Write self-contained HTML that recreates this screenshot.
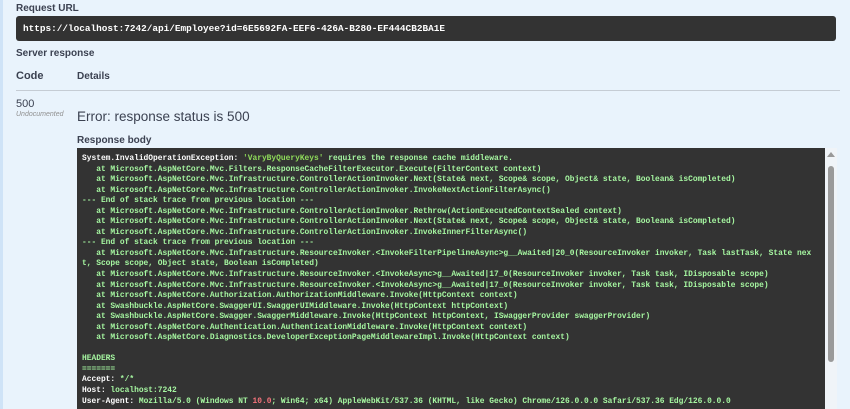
<!DOCTYPE html>
<html><head><style>
body{margin:0;width:850px;height:409px;overflow:hidden;background:#e9f3fc;font-family:"Liberation Sans",sans-serif;color:#3b4151;position:relative}
.lb{position:absolute;left:0;top:0;width:3px;height:409px;background:#cfe3f7}
.a{position:absolute;white-space:nowrap}
.h{font-weight:bold;font-size:10px}
.url{position:absolute;left:16px;top:16px;width:820px;height:25px;background:#333;border-radius:3px;color:#fff;font:bold 9.4px "Liberation Mono",monospace;line-height:25px;text-indent:7px}
pre{position:absolute;left:77px;top:148px;height:261px;margin:0;padding:6px 0 0 5px;background:#333;color:#a6f7a1;font:bold 7.9px/10.55px "Liberation Mono",monospace;overflow:hidden;box-sizing:border-box;width:748px}
.w{color:#fff}.s{color:#8fdc5a}.r{color:#f5737b}
.sb{position:absolute;left:825px;top:148px;width:12px;height:261px;background:#f0f4f8}
.th{position:absolute;left:828px;top:166px;width:6px;height:196px;background:#9a9a9a;border-radius:3px}
</style></head><body>
<div class="lb"></div>
<div class="a h" style="left:16px;top:3px">Request URL</div>
<div class="url">https://localhost:7242/api/Employee?id=6E5692FA-EEF6-426A-B280-EF444CB2BA1E</div>
<div class="a h" style="left:16px;top:48px">Server response</div>
<div class="a" style="left:16px;top:70px;font-size:11px;font-weight:bold">Code</div>
<div class="a h" style="left:77px;top:71px">Details</div>
<div class="a" style="left:16px;top:90px;width:824px;height:1px;background:#c5ccd4"></div>
<div class="a" style="left:16px;top:98px;font-size:11px">500</div>
<div class="a" style="left:16px;top:111px;font-size:7px;font-style:italic;color:#909090">Undocumented</div>
<div class="a" style="left:77px;top:109px;font-size:13.5px">Error: response status is 500</div>
<div class="a h" style="left:77px;top:135px">Response body</div>
<pre><span class="w">System.InvalidOperationException: </span><span class="s">'VaryByQueryKeys'</span> requires the response cache middleware.
   at Microsoft.AspNetCore.Mvc.Filters.ResponseCacheFilterExecutor.Execute(FilterContext context)
   at Microsoft.AspNetCore.Mvc.Infrastructure.ControllerActionInvoker.Next(State&amp; next, Scope&amp; scope, Object&amp; state, Boolean&amp; isCompleted)
   at Microsoft.AspNetCore.Mvc.Infrastructure.ControllerActionInvoker.InvokeNextActionFilterAsync()
--- End of stack trace from previous location ---
   at Microsoft.AspNetCore.Mvc.Infrastructure.ControllerActionInvoker.Rethrow(ActionExecutedContextSealed context)
   at Microsoft.AspNetCore.Mvc.Infrastructure.ControllerActionInvoker.Next(State&amp; next, Scope&amp; scope, Object&amp; state, Boolean&amp; isCompleted)
   at Microsoft.AspNetCore.Mvc.Infrastructure.ControllerActionInvoker.InvokeInnerFilterAsync()
--- End of stack trace from previous location ---
   at Microsoft.AspNetCore.Mvc.Infrastructure.ResourceInvoker.&lt;InvokeFilterPipelineAsync&gt;g__Awaited|20_0(ResourceInvoker invoker, Task lastTask, State nex
t, Scope scope, Object state, Boolean isCompleted)
   at Microsoft.AspNetCore.Mvc.Infrastructure.ResourceInvoker.&lt;InvokeAsync&gt;g__Awaited|17_0(ResourceInvoker invoker, Task task, IDisposable scope)
   at Microsoft.AspNetCore.Mvc.Infrastructure.ResourceInvoker.&lt;InvokeAsync&gt;g__Awaited|17_0(ResourceInvoker invoker, Task task, IDisposable scope)
   at Microsoft.AspNetCore.Authorization.AuthorizationMiddleware.Invoke(HttpContext context)
   at Swashbuckle.AspNetCore.SwaggerUI.SwaggerUIMiddleware.Invoke(HttpContext httpContext)
   at Swashbuckle.AspNetCore.Swagger.SwaggerMiddleware.Invoke(HttpContext httpContext, ISwaggerProvider swaggerProvider)
   at Microsoft.AspNetCore.Authentication.AuthenticationMiddleware.Invoke(HttpContext context)
   at Microsoft.AspNetCore.Diagnostics.DeveloperExceptionPageMiddlewareImpl.Invoke(HttpContext context)

HEADERS
=======
<span class="w">Accept: </span>*/*
<span class="w">Host: </span>localhost:7242
<span class="w">User-Agent: </span>Mozilla/5.0 (Windows NT <span class="r">10.0</span>; Win64; x64) AppleWebKit/537.36 (KHTML, like Gecko) Chrome/126.0.0.0 Safari/537.36 Edg/126.0.0.0</pre>
<div class="sb"></div>
<div class="a" style="left:827px;top:152px;width:0;height:0;border-left:4px solid transparent;border-right:4px solid transparent;border-bottom:5px solid #999"></div>
<div class="th"></div>
</body></html>
